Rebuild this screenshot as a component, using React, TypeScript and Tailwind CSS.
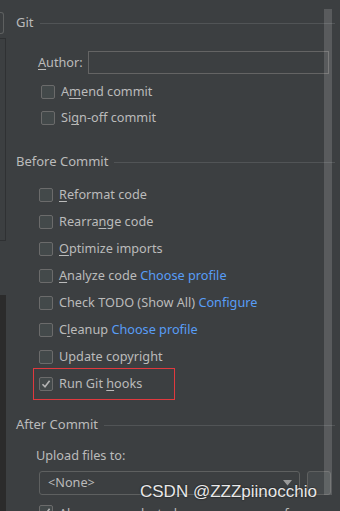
import React from "react";

const font = { fontFamily: '"Noto Sans", "Open Sans", sans-serif' };

const Mn = ({ children }: { children: React.ReactNode }) => (
  <span className="underline underline-offset-2 decoration-1">{children}</span>
);

const Check = ({ checked = false }: { checked?: boolean }) => (
  <div className="w-[14px] h-[14px] shrink-0 rounded-[2px] border border-[#6b6b6b] bg-[#43494a] flex items-center justify-center">
    {checked && (
      <svg width="10" height="10" viewBox="0 0 10 10">
        <path d="M1.5 5.2 L4 7.8 L8.6 1.8" fill="none" stroke="#b4b4b4" strokeWidth="1.6" />
      </svg>
    )}
  </div>
);

const Header = ({ title, mt }: { title: string; mt: string }) => (
  <div className={`h-[20px] shrink-0 flex items-center gap-[6px] pl-[10px] ${mt}`}>
    <span className="text-[13px] text-[#bbbbbb] whitespace-nowrap">{title}</span>
    <div className="flex-1 h-px bg-[#515456]" />
  </div>
);

const Item = ({ children }: { children: React.ReactNode }) => (
  <div className="h-[27px] shrink-0 flex items-center gap-[6px] pl-[33px] text-[12.7px] text-[#bbbbbb] whitespace-nowrap">
    {children}
  </div>
);

const Link = ({ children }: { children: React.ReactNode }) => (
  <span className="text-[#589df6]">{children}</span>
);

export default function App() {
  return (
    <div className="relative w-[340px] h-[511px] overflow-hidden bg-[#3c3f41] flex" style={font}>
      {/* left strip */}
      <div className="w-[6px] shrink-0 flex flex-col">
        <div className="mt-[12px] h-[22px] w-[4px] shrink-0 rounded-r-[3px] border border-l-0 border-[#5e6060]" />
        <div className="mt-[4px] h-[203px] w-[6px] shrink-0 border border-l-0 border-[#2f3133]" />
        <div className="mt-[54px] flex-1 w-[6px] bg-[#2b2b2b]" />
      </div>

      {/* content */}
      <div className="flex-1 flex flex-col pr-[7px]">
        <Header title="Git" mt="mt-[13px]" />

        <div className="mt-[18px] h-[23px] shrink-0 flex items-center pl-[32px] gap-[5px]">
          <span className="text-[12.7px] text-[#bbbbbb]">
            <Mn>A</Mn>uthor:
          </span>
          <div className="w-[241px] h-[23px] shrink-0 border border-[#646464] bg-[#3c3f41]" />
        </div>

        <div className="mt-[5px] h-[26px] shrink-0 flex items-center gap-[6px] pl-[35px] text-[12.7px] text-[#bbbbbb]">
          <Check />
          <span>
            A<Mn>m</Mn>end commit
          </span>
        </div>
        <div className="h-[26px] shrink-0 flex items-center gap-[6px] pl-[35px] text-[12.7px] text-[#bbbbbb]">
          <Check />
          <span>
            Si<Mn>g</Mn>n-off commit
          </span>
        </div>

        <Header title="Before Commit" mt="mt-[21px]" />

        <div className="mt-[9px] flex flex-col shrink-0">
          <Item>
            <Check />
            <span>
              <Mn>R</Mn>eformat code
            </span>
          </Item>
          <Item>
            <Check />
            <span>
              Rearra<Mn>n</Mn>ge code
            </span>
          </Item>
          <Item>
            <Check />
            <span>
              <Mn>O</Mn>ptimize imports
            </span>
          </Item>
          <Item>
            <Check />
            <span>
              <Mn>A</Mn>nalyze code <Link>Choose profile</Link>
            </span>
          </Item>
          <Item>
            <Check />
            <span>
              Check TODO (Show All) <Link>Configure</Link>
            </span>
          </Item>
          <Item>
            <Check />
            <span>
              C<Mn>l</Mn>eanup <Link>Choose profile</Link>
            </span>
          </Item>
          <Item>
            <Check />
            <span>Update copyright</span>
          </Item>
          <Item>
            <Check checked />
            <span>
              Run Git <Mn>h</Mn>ooks
            </span>
          </Item>
        </div>

        <Header title="After Commit" mt="mt-[18px]" />

        <div className="mt-[11px] h-[20px] shrink-0 flex items-center pl-[30px] text-[12.7px] text-[#bbbbbb]">
          Upload files to:
        </div>

        <div className="mt-[5px] h-[24px] shrink-0 flex items-center pl-[33px] gap-[7px]">
          <div className="w-[261px] h-[24px] shrink-0 rounded-[3px] border border-[#5e6060] flex items-center justify-between pl-[8px] pr-[7px]">
            <span className="text-[12.7px] text-[#bbbbbb]">&lt;None&gt;</span>
            <svg width="9" height="6" viewBox="0 0 9 6">
              <path d="M0 0 H9 L4.5 5.5 Z" fill="#9a9a9a" />
            </svg>
          </div>
          <div className="w-[24px] h-[24px] shrink-0 rounded-[3px] border border-[#5e6060] bg-[#45494b]" />
        </div>

        <div className="mt-[10px] h-[14px] shrink-0 flex items-start gap-[6px] pl-[33px] text-[12.7px] text-[#bbbbbb] whitespace-nowrap">
          <Check checked />
          <span className="-mt-[1px]">Always use selected server or group of servers</span>
        </div>
      </div>

      {/* annotation box */}
      <div className="absolute left-[33px] top-[368px] w-[142px] h-[32px] border border-[#e0393e]" />

      {/* scrollbar overlay */}
      <div className="absolute left-[324px] top-[9px] w-[8px] h-[486px] bg-white/15" />

      {/* watermark */}
      <div
        className="absolute left-[140px] top-[479px] text-[17px] text-white/90 whitespace-nowrap [text-shadow:0_0_2px_rgba(0,0,0,0.8)]"
        style={{ fontFamily: '"Liberation Sans", Arial, sans-serif' }}
      >
        CSDN @ZZZpiinocchio
      </div>
    </div>
  );
}
